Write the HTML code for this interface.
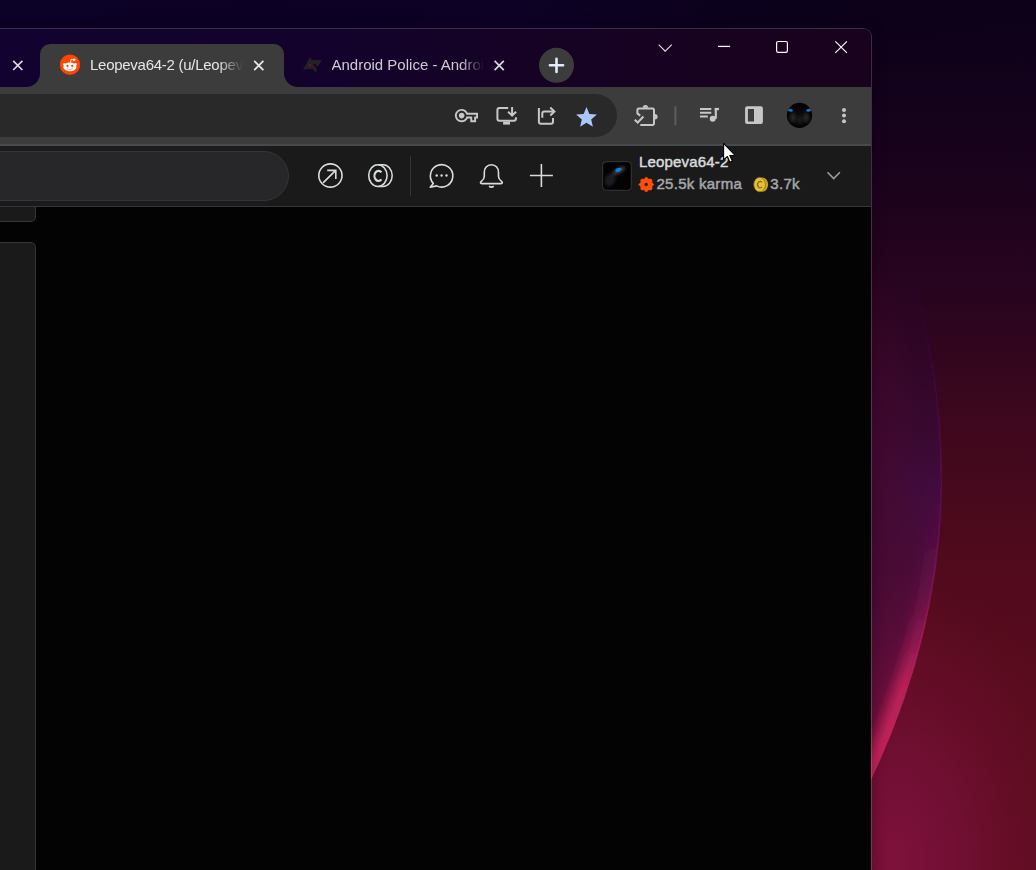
<!DOCTYPE html>
<html lang="en">
<head>
<meta charset="utf-8">
<title>Leopeva64-2 (u/Leopeva64-2) - Reddit</title>
<style>
*{box-sizing:border-box;margin:0;padding:0}
html,body{width:1036px;height:870px;overflow:hidden;background:#12021c}
body{position:relative;font-family:"Liberation Sans",sans-serif;-webkit-font-smoothing:antialiased}
.abs{position:absolute}
#wall{left:0;top:0;width:1036px;height:870px}
#win{left:-40px;top:28px;width:912px;height:900px;border:1px solid rgba(240,230,236,0.2);border-top-right-radius:9px;overflow:hidden;background:#030303;background-clip:padding-box;box-shadow:0 1px 14px 1px rgba(3,0,10,0.26)}
/* inside window coordinates: x' = x+40-1 = x+39 ; y' = y-29 */
#in{position:absolute;left:39px;top:-29px;width:871px;height:900px}
#titlebar{left:0;top:29px;width:871px;height:58px;background:linear-gradient(90deg,#11022f 0%,#12022c 35%,#160223 65%,#19021d 100%)}
#toolbar{left:0;top:87px;width:871px;height:57px;background:#3c3c3c}
#tbline{left:0;top:144px;width:871px;height:2px;background:#474a4c}
#rheader{left:0;top:146px;width:871px;height:60px;background:#1a1a1b}
#rline{left:0;top:206px;width:871px;height:1px;background:#363738}
#page{left:0;top:207px;width:871px;height:663px;background:#030303}
.utxt{font-size:15px;line-height:20px;height:20px;white-space:nowrap;-webkit-text-stroke:0.5px currentColor}
.tabtxt{font-size:15px;white-space:nowrap;overflow:hidden;line-height:20px;height:20px}
</style>
</head>
<body>
<svg id="wall" class="abs" width="1036" height="870" viewBox="0 0 1036 870">
  <defs>
    <linearGradient id="wg" x1="0" y1="0" x2="0" y2="1">
      <stop offset="0" stop-color="#0c0119"/>
      <stop offset="0.17" stop-color="#17021b"/>
      <stop offset="0.34" stop-color="#29041f"/>
      <stop offset="0.5" stop-color="#40081d"/>
      <stop offset="0.64" stop-color="#500a1c"/>
      <stop offset="0.8" stop-color="#5a0c1e"/>
      <stop offset="1" stop-color="#5e0d1e"/>
    </linearGradient>
    <linearGradient id="topg" x1="0" y1="0" x2="1" y2="0">
      <stop offset="0" stop-color="#0c0126"/>
      <stop offset="0.5" stop-color="#0d0125"/>
      <stop offset="0.85" stop-color="#0c0119" stop-opacity="0.6"/>
      <stop offset="1" stop-color="#0c0119" stop-opacity="0"/>
    </linearGradient>
    <linearGradient id="shad" x1="0" y1="0" x2="0" y2="1">
      <stop offset="0.3" stop-color="#000" stop-opacity="0"/>
      <stop offset="1" stop-color="#04000c" stop-opacity="0.45"/>
    </linearGradient>
    <radialGradient id="inred" cx="866" cy="490" r="56" gradientUnits="userSpaceOnUse" gradientTransform="translate(866 490) scale(1 4.2) translate(-866 -490)">
      <stop offset="0" stop-color="#45092a" stop-opacity="0.650"/>
      <stop offset="0.5" stop-color="#45092a" stop-opacity="0.400"/>
      <stop offset="1" stop-color="#45092a" stop-opacity="0"/>
    </radialGradient>
    <radialGradient id="mag" cx="895" cy="860" r="300" gradientUnits="userSpaceOnUse" gradientTransform="translate(895 860) scale(0.62 1) translate(-895 -860)">
      <stop offset="0" stop-color="#7e113b"/>
      <stop offset="0.35" stop-color="#740f36" stop-opacity="0.85"/>
      <stop offset="0.7" stop-color="#6a0d2c" stop-opacity="0.45"/>
      <stop offset="1" stop-color="#5e0d1e" stop-opacity="0"/>
    </radialGradient>
    <linearGradient id="petal" x1="0" y1="200" x2="0" y2="800" gradientUnits="userSpaceOnUse">
      <stop offset="0.1" stop-color="#28052a" stop-opacity="0"/>
      <stop offset="0.28" stop-color="#2f062e" stop-opacity="0.6"/>
      <stop offset="0.47" stop-color="#3f0b3b"/>
      <stop offset="0.62" stop-color="#4b0c39"/>
      <stop offset="0.78" stop-color="#620e3b"/>
      <stop offset="1" stop-color="#7c113a"/>
    </linearGradient>
    <linearGradient id="edge" x1="0" y1="200" x2="0" y2="800" gradientUnits="userSpaceOnUse">
      <stop offset="0.12" stop-color="#401048" stop-opacity="0"/>
      <stop offset="0.36" stop-color="#4a1050" stop-opacity="0.7"/>
      <stop offset="0.55" stop-color="#6a1458" stop-opacity="0.9"/>
      <stop offset="0.75" stop-color="#aa1c56"/>
      <stop offset="0.95" stop-color="#c42459"/>
    </linearGradient>
    <linearGradient id="glow" x1="0" y1="200" x2="0" y2="800" gradientUnits="userSpaceOnUse">
      <stop offset="0.45" stop-color="#6a1458" stop-opacity="0"/>
      <stop offset="0.66" stop-color="#8a1858" stop-opacity="0.4"/>
      <stop offset="0.8" stop-color="#bc2058" stop-opacity="0.95"/>
      <stop offset="0.95" stop-color="#c4235a"/>
    </linearGradient>
    <clipPath id="pc"><path d="M880.8 180 Q942 330 942 480 Q942 640 861.1 800 L840 800 L840 180 Z"/></clipPath>
    <filter id="bl" filterUnits="userSpaceOnUse" x="780" y="100" width="256" height="770"><feGaussianBlur stdDeviation="6"/></filter>
    <filter id="bl2" filterUnits="userSpaceOnUse" x="780" y="100" width="256" height="770"><feGaussianBlur stdDeviation="1.1"/></filter>
  </defs>
  <rect width="1036" height="870" fill="url(#wg)"/>
  <rect width="1036" height="40" fill="url(#topg)"/>
  <rect x="700" y="500" width="336" height="370" fill="url(#mag)"/>
  <path d="M880.8 180 Q942 330 942 480 Q942 640 861.1 800 L840 800 L840 180 Z" fill="url(#petal)"/>
  <g clip-path="url(#pc)">
    <rect x="860" y="160" width="80" height="600" fill="url(#inred)"/>
    <path d="M880.8 180 Q942 330 942 480 Q942 640 861.1 800" fill="none" stroke="url(#glow)" stroke-width="27" filter="url(#bl)"/>
    <path d="M880.8 180 Q942 330 942 480 Q942 640 861.1 800" fill="none" stroke="url(#edge)" stroke-width="2.5" filter="url(#bl2)"/>
  </g>
</svg>

<div id="win" class="abs"><div id="in">
  <div id="titlebar" class="abs"></div>
  <!-- tab strip shapes -->
  <svg class="abs" style="left:0;top:0" width="871" height="100" viewBox="0 0 871 100">
    <path d="M26 87 A14 14 0 0 0 40 73 V54 A10 10 0 0 1 50 44 H274 A10 10 0 0 1 284 54 V73 A14 14 0 0 0 298 87 Z" fill="#3c3c3c"/>
    <circle cx="556.5" cy="65.3" r="17.5" fill="#3c3c3c"/>
    <path d="M556.5 58.7V71.9M549.9 65.3H563.1" stroke="#e3ebf6" stroke-width="2.6" stroke-linecap="round" fill="none"/>
    <!-- left tab close -->
    <path d="M13.2 60.8L22.4 70M22.4 60.8L13.2 70" stroke="#d9d6de" stroke-width="1.7" fill="none"/>
    <!-- active tab close -->
    <path d="M254.2 60.9L263.4 70.1M263.4 60.9L254.2 70.1" stroke="#e6e6e6" stroke-width="1.8" fill="none"/>
    <!-- second tab close -->
    <path d="M494.6 60.9L503.8 70.1M503.8 60.9L494.6 70.1" stroke="#d9d6de" stroke-width="1.7" fill="none"/>
    <!-- reddit favicon -->
    <circle cx="70" cy="64.7" r="10.2" fill="#ff4500"/>
    <g fill="#fff">
      <ellipse cx="69.9" cy="66.8" rx="6.6" ry="4.4"/>
      <circle cx="64.3" cy="64.2" r="1.3"/>
      <circle cx="75.5" cy="64.2" r="1.3"/>
      <circle cx="74.2" cy="59.8" r="1.3"/>
    </g>
    <path d="M70.4 62.6L71.1 59.4L74 60" stroke="#fff" stroke-width="0.9" fill="none"/>
    <circle cx="67.5" cy="66" r="1.15" fill="#ff4500"/>
    <circle cx="72.3" cy="66" r="1.15" fill="#ff4500"/>
    <path d="M67 68.6Q69.9 70.6 72.8 68.6" stroke="#e0a080" stroke-width="0.9" fill="none"/>
    <!-- android police favicon -->
    <path d="M310 57L311.7 60.1L321.8 60.1L317.5 67.1L314.6 63.6L313.4 64.6L317.1 69.8L315.5 72.7L312.6 69L303 69.5Z" fill="#222223"/>
    <rect x="309" y="64.1" width="2.1" height="2.1" fill="#860a24"/>
    <!-- window controls -->
    <path d="M658.7 44.7L665.2 51.2L671.8 44.7" stroke="#e4e0e6" stroke-width="1.1" fill="none"/>
    <rect x="718" y="45.8" width="12.1" height="1.25" fill="#fff"/>
    <rect x="776.6" y="41.5" width="10.8" height="10.9" rx="1.6" stroke="#fff" stroke-width="1.2" fill="none"/>
    <path d="M835.3 41.3L846.9 52.9M846.9 41.3L835.3 52.9" stroke="#fff" stroke-width="1.15" fill="none"/>
  </svg>
  <div class="abs tabtxt" style="left:90px;top:54.5px;width:153px;color:#e6e6e6;font-size:15px;letter-spacing:-0.27px;-webkit-mask-image:linear-gradient(90deg,#000 0,#000 128px,transparent 153px);mask-image:linear-gradient(90deg,#000 0,#000 128px,transparent 153px)">Leopeva64-2 (u/Leopeva64-2) - Reddit</div>
  <div class="abs tabtxt" style="left:331.5px;top:54.5px;width:152px;color:#cfcbd3;font-size:15px;-webkit-mask-image:linear-gradient(90deg,#000 0,#000 128px,transparent 152px);mask-image:linear-gradient(90deg,#000 0,#000 128px,transparent 152px)">Android Police - Android news, reviews</div>
  <div id="toolbar" class="abs"></div>
  <div class="abs" style="left:-60px;top:94px;width:677px;height:43px;border-radius:21.5px;background:#292929"></div>
  <svg class="abs" style="left:0;top:86px" width="871" height="60" viewBox="0 86 871 60">
    <g fill="#c7c7c7">
      <!-- key -->
      <g transform="translate(454.9 104.1) scale(0.963 0.957)">
        <path fill-rule="evenodd" d="M22 19h-6v-4h-2.68c-1.14 2.42-3.6 4-6.32 4-3.86 0-7-3.14-7-7s3.14-7 7-7c2.72 0 5.17 1.58 6.32 4H24v6h-2v4zm-4-2h2v-4h2v-2H11.94l-.23-.67C11.01 8.34 9.11 7 7 7c-2.76 0-5 2.24-5 5s2.24 5 5 5c2.11 0 4.01-1.34 4.71-3.33l.23-.67H18v4zM7 15c-1.65 0-3-1.35-3-3s1.350-3 3-3 3 1.35 3 3-1.35 3-3 3zm0-4c-.55 0-1 .45-1 1s.45 1 1 1 1-.45 1-1-.45-1-1-1z"/>
        <circle cx="7" cy="12" r="1.9"/>
      </g>
      <!-- install stand -->
      <rect x="503.1" y="121.6" width="6.9" height="3"/>
      <!-- star -->
      <path fill="#a8c7fa" d="M586.5 106.9L589.4 113.9L596.9 114.5L591.2 119.4L592.9 126.7L586.5 122.8L580.1 126.7L581.8 119.4L576.1 114.5L583.6 113.9Z"/>
      <!-- media note -->
      <circle cx="712.7" cy="118.7" r="2.95"/>
      <rect x="714.7" y="107.9" width="4.3" height="2.3"/>
      <!-- side panel -->
      <path fill-rule="evenodd" d="M747.1 106.3H760.9A2 2 0 0 1 762.9 108.3V122.1A2 2 0 0 1 760.900 124.100H747.100A2 2 0 0 1 745.100 122.100V108.300A2 2 0 0 1 747.100 106.300ZM747.900 109.000V121.500H754.000V109.000Z"/>
      <!-- extension bumps -->
      <path d="M642.7 107.7A2.7 2.7 0 0 1 648.1 107.7Z"/>
      <path d="M654.9 114.05A2.7 2.7 0 0 1 654.9 119.45Z"/>
      <!-- menu dots -->
      <circle cx="844" cy="109.9" r="2"/>
      <circle cx="844" cy="115.5" r="2"/>
      <circle cx="844" cy="121.2" r="2"/>
    </g>
    <g fill="none" stroke="#c7c7c7" stroke-width="2">
      <!-- install monitor -->
      <path d="M508.2 107.9H499.400A2 2 0 0 0 497.400 109.900V118.700A2 2 0 0 0 499.400 120.700H513.900A2 2 0 0 0 515.900 118.700V117.200"/>
      <path d="M512.100 106.900V115.600M508.100 111.700L512.100 115.700L516.100 111.700"/>
      <!-- share -->
      <path d="M538.9 108.100V121.800A2 2 0 0 0 540.900 123.800H551A2 2 0 0 0 553 121.800V117.900"/>
      <path d="M542.300 117.800V113.500A2 2 0 0 1 544.300 111.500H553.500"/>
      <path d="M550.300 107.500L554.400 111.500L550.300 115.500"/>
      <!-- extension -->
      <path d="M640.300 124.900H652.500A1.500 1.500 0 0 0 654 123.400V110.100A1.500 1.500 0 0 0 652.500 108.600H638.900A1.500 1.500 0 0 0 637.400 110.100V113.400L640.200 115.600"/>
      <path d="M634.800 119.700L637.700 122.600L643.400 116.500" stroke-width="2.1"/>
      <!-- media lines -->
      <path d="M700 109H711.300M700 112.700H711.300M700 116.400H707.800" stroke-width="2"/>
      <path d="M715.800 108V118.700" stroke-width="2.1"/>
    </g>
    <rect x="674.4" y="106" width="2" height="19.400" rx="1" fill="#5c5c62"/>
    <!-- profile avatar -->
    <defs>
      <radialGradient id="av" cx="0.5" cy="0.55" r="0.5">
        <stop offset="0" stop-color="#0c0c0d"/>
        <stop offset="0.6" stop-color="#070708"/>
        <stop offset="1" stop-color="#020202"/>
      </radialGradient>
      <filter id="avb" x="-50%" y="-50%" width="200%" height="200%"><feGaussianBlur stdDeviation="1.600"/></filter>
      <clipPath id="avc"><circle cx="799.500" cy="115.400" r="12.600"/></clipPath>
    </defs>
    <circle cx="799.5" cy="115.400" r="12.6" fill="url(#av)"/>
    <g filter="url(#avb)" opacity="0.850"><ellipse cx="792.800" cy="117.500" rx="3" ry="5" fill="#2c2c2e"/><ellipse cx="806.200" cy="117.500" rx="3" ry="5" fill="#2c2c2e"/><ellipse cx="799.500" cy="120" rx="2.500" ry="4" fill="#1c1c1e"/></g>
    <g clip-path="url(#avc)"><ellipse cx="790.400" cy="110.200" rx="2.600" ry="1.500" fill="#1a6fd2" transform="rotate(8 790.400 110.200)"/>
    <ellipse cx="808.700" cy="110.200" rx="2.600" ry="1.500" fill="#1a6fd2" transform="rotate(-8 808.700 110.200)"/></g>
  </svg>
  <div id="tbline" class="abs"></div>
  <div id="rheader" class="abs"></div>
  <div id="rline" class="abs"></div>
  <div id="page" class="abs"></div>
  <!-- search box -->
  <div class="abs" style="left:-60px;top:151px;width:349px;height:50px;border-radius:25px;background:#272729;border:1px solid #343536"></div>
  <!-- left cards -->
  <div class="abs" style="left:-20px;top:200px;width:56px;height:22px;background:#1a1a1b;border:1px solid #343536;border-radius:0 0 5px 0;clip-path:inset(7px 0 0 0)"></div>
  <div class="abs" style="left:-20px;top:242px;width:56px;height:700px;background:#1a1a1b;border:1px solid #343536;border-radius:0 5px 0 0"></div>
  <!-- header icons -->
  <svg class="abs" style="left:300px;top:150px" width="571" height="56" viewBox="300 150 571 56">
    <g fill="none" stroke="#d9dcde" stroke-width="1.6">
      <!-- popular -->
      <circle cx="330.4" cy="175.5" r="11.6"/>
      <path d="M323 182.900L335.700 170.400M327.200 170.400H335.800V179"/>
      <!-- coins -->
      <ellipse cx="377.900" cy="175.600" rx="9.200" ry="10.900" stroke-width="1.600"/>
      <path d="M378.500 164.700H383A9.200 10.900 0 0 1 383 186.500H378.500" stroke-width="1.500"/>
      <path d="M381.400 172.400A4 5.100 0 1 0 381.400 179.400" stroke-width="2.200"/>
      <!-- chat -->
      <path d="M433.300 183.400A11.200 11.200 0 1 1 436.600 185.900L430.200 187.200Z" stroke-linejoin="round"/>
      <!-- bell -->
      <path d="M491.400 164.700C486.800 164.700 484.300 168.200 484.300 172.200V176.500C484.300 178.500 483.300 179.800 481.300 181.300C480 182.300 480.300 183.600 481.800 183.600H501C502.500 183.600 502.800 182.300 501.500 181.300C499.500 179.800 498.500 178.500 498.500 176.500V172.200C498.500 168.200 496 164.700 491.400 164.700Z" stroke-linejoin="round"/>
      <path d="M489 186.200Q491.400 188.200 493.800 186.200" stroke-width="1.600"/>
      <!-- plus -->
      <path d="M541.400 164V187M529.900 175.500H552.900"/>
      <!-- chevron -->
      <path d="M827.500 172.300L833.700 178.500L839.900 172.300" stroke="#9a9c9e" stroke-width="1.600"/>
    </g>
    <g fill="#d7dadc">
      <circle cx="436.700" cy="175.500" r="1.200"/>
      <circle cx="441.600" cy="175.500" r="1.200"/>
      <circle cx="446.500" cy="175.500" r="1.200"/>
    </g>
    <rect x="410" y="156" width="1" height="40" fill="#343536"/>
    <!-- reddit avatar -->
    <defs>
      <filter id="ravb" x="-50%" y="-50%" width="200%" height="200%"><feGaussianBlur stdDeviation="1.500"/></filter>
      <linearGradient id="rav" x1="0" y1="0" x2="1" y2="1">
        <stop offset="0" stop-color="#15161a"/>
        <stop offset="0.5" stop-color="#0c0c0e"/>
        <stop offset="1" stop-color="#050506"/>
      </linearGradient>
    </defs>
    <rect x="602.700" y="161.700" width="28.600" height="28.600" rx="3.600" fill="#030303" stroke="#37383a" stroke-width="1"/>
    <g filter="url(#ravb)">
      <ellipse cx="619" cy="170.600" rx="7" ry="2.800" fill="#54545c" opacity="0.700" transform="rotate(-28 619 170.600)"/>
      <ellipse cx="610" cy="180" rx="5" ry="6.500" fill="#202022" opacity="0.900" transform="rotate(25 610 180)"/>
    </g>
    <ellipse cx="618.500" cy="169.900" rx="3.300" ry="1.900" fill="#1c78d6" transform="rotate(-20 618.500 169.900)"/>
    <!-- karma icon -->
    <g fill="#ff4d0a">
      <rect x="640.500" y="178.800" width="11.800" height="11.400" rx="1.600"/>
      <ellipse cx="646.300" cy="179.400" rx="1.900" ry="2.500"/>
      <ellipse cx="646.300" cy="189.600" rx="1.900" ry="2.500"/>
      <path d="M641.500 181.700L638.200 184.500L641.500 187.300ZM651.300 181.700L654.200 184.500L651.300 187.300Z"/>
    </g>
    <circle cx="646.200" cy="184.500" r="1.700" fill="#2a2320"/>
    <!-- coin icon -->
    <ellipse cx="762.300" cy="184.600" rx="5.800" ry="7.200" fill="#c9a227"/>
    <ellipse cx="759.600" cy="184.600" rx="5.800" ry="7.200" fill="#e3bf3c" stroke="#8a6a10" stroke-width="0.700"/>
    <path d="M762 182.300A2.600 3.200 0 1 0 762 186.900" stroke="#8a6a10" stroke-width="1.300" fill="none"/>
  </svg>
  <div class="abs utxt" style="left:639px;top:151.800px;color:#d7dadc;letter-spacing:0.170px">Leopeva64-2</div>
  <div class="abs utxt" style="left:656.500px;top:173.500px;color:#a5a7a9;letter-spacing:0.270px">25.5k karma</div>
  <div class="abs utxt" style="left:770.300px;top:173.500px;color:#a5a7a9;letter-spacing:0.300px">3.7k</div>
  <!-- mouse cursor -->
  <svg class="abs" style="left:720px;top:140px" width="20" height="28" viewBox="720 140 20 28">
    <path d="M723.600 143.400V159.900L727.400 156.500L729.900 162.200L732.300 161.100L729.800 155.500L734.900 155.200Z" fill="#fff" stroke="#000" stroke-width="1.100" stroke-linejoin="round"/>
  </svg>
</div></div>
</body>
</html>
